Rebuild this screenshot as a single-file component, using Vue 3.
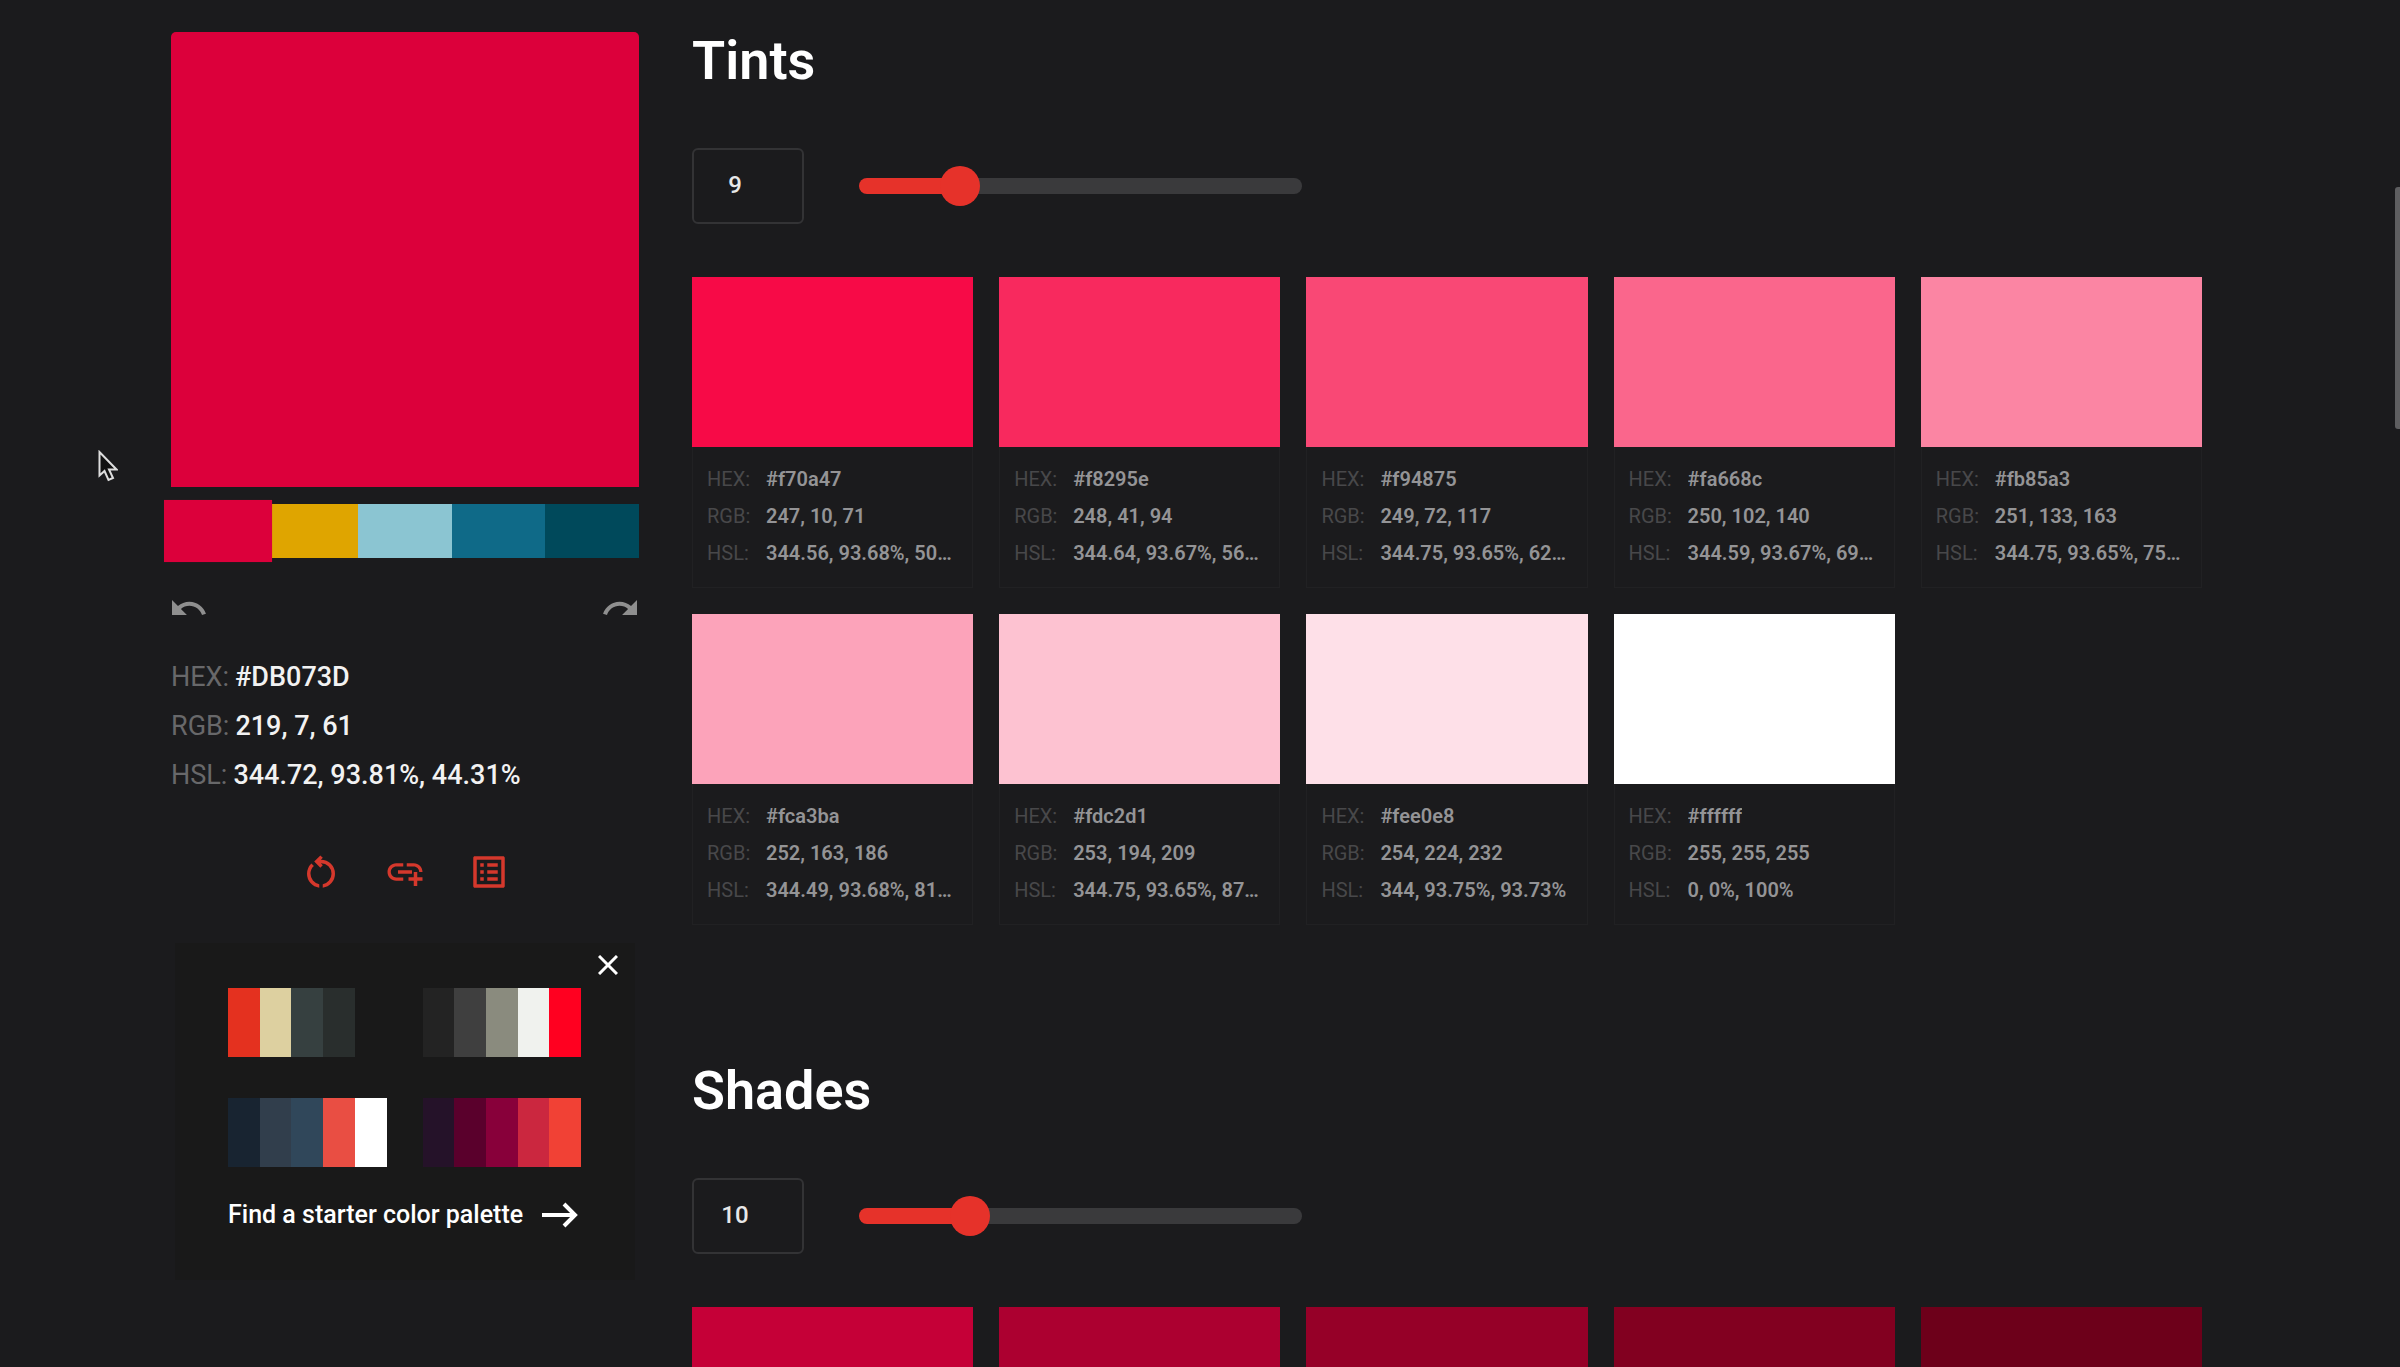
<script setup>
import { ref } from 'vue'

const base = ['#dc003b', '#dfa500', '#8bc5d2', '#0f6a88', '#00495b']
const details = [
  ['HEX', '#DB073D'],
  ['RGB', '219, 7, 61'],
  ['HSL', '344.72, 93.81%, 44.31%'],
]
const starters = [
  ['#e4311f', '#ddd0a0', '#364040', '#292e2d', '#191919'],
  ['#232323', '#3f3f3f', '#8a8b7e', '#f0f2ee', '#ff0020'],
  ['#182431', '#313e4c', '#30475a', '#e94e43', '#ffffff'],
  ['#251229', '#5a002c', '#88003a', '#cb273f', '#f14135'],
]
const tints = [
  ['#f70a47', '247, 10, 71', '344.56, 93.68%, 50.39%'],
  ['#f8295e', '248, 41, 94', '344.64, 93.67%, 56.67%'],
  ['#f94875', '249, 72, 117', '344.75, 93.65%, 62.94%'],
  ['#fa668c', '250, 102, 140', '344.59, 93.67%, 69.02%'],
  ['#fb85a3', '251, 133, 163', '344.75, 93.65%, 75.29%'],
  ['#fca3ba', '252, 163, 186', '344.49, 93.68%, 81.37%'],
  ['#fdc2d1', '253, 194, 209', '344.75, 93.65%, 87.65%'],
  ['#fee0e8', '254, 224, 232', '344, 93.75%, 93.73%'],
  ['#ffffff', '255, 255, 255', '0, 0%, 100%'],
].map(([hex, rgb, hsl]) => ({ hex, rows: [['HEX', hex], ['RGB', rgb], ['HSL', hsl]] }))
const shades = ['#c50037', '#ac0030', '#960028', '#820020', '#6d001a'].map((hex) => ({ hex, rows: [] }))

const MIN = 1
const MAX = 41
const sections = ref([
  { id: 'tints', title: 'Tints', count: 9, cards: tints },
  { id: 'shades', title: 'Shades', count: 10, cards: shades },
])
const fill = (n) => ((n - MIN) / (MAX - MIN)) * 100 + '%'
</script>

<template>
  <div class="page">
    <aside class="side">
      <div class="preview"></div>
      <div class="strip">
        <button
          v-for="(c, i) in base"
          :key="c"
          type="button"
          :class="{ active: i === 0 }"
          :style="{ background: c }"
          :aria-label="c"
        ></button>
      </div>
      <div class="history">
        <button type="button" aria-label="Undo">
          <svg viewBox="2 7 20.5 9"><path d="M12.5 8c-2.65 0-5.05.99-6.9 2.6L2 7v9h9l-3.62-3.62c1.39-1.16 3.16-1.88 5.12-1.88 3.54 0 6.55 2.31 7.6 5.5l2.37-.78C21.08 11.03 17.15 8 12.5 8z" /></svg>
        </button>
        <button type="button" aria-label="Redo">
          <svg viewBox="1.5 7 20.5 9"><path d="M18.4 10.6C16.55 8.99 14.15 8 11.5 8c-4.65 0-8.58 3.03-9.96 7.22L3.9 16c1.05-3.19 4.05-5.5 7.6-5.5 1.95 0 3.73.72 5.12 1.88L13 16h9V7l-3.6 3.6z" /></svg>
        </button>
      </div>
      <dl class="details">
        <div v-for="[k, v] in details" :key="k"><dt>{{ k }}:</dt><dd>{{ v }}</dd></div>
      </dl>
      <div class="tools">
        <button type="button" aria-label="Reset">
          <svg viewBox="0 0 24 24">
            <path d="M11 20.95Q7.975 20.575 5.988 18.312 4 16.05 4 13q0-1.65.65-3.163Q5.3 8.325 6.5 7.2l1.425 1.425q-.95.85-1.437 1.975Q6 11.725 6 13q0 2.2 1.4 3.887Q8.8 18.575 11 18.95Zm2 0v-2q2.175-.4 3.587-2.075Q18 15.2 18 13q0-2.5-1.75-4.25T12 7h-.075l1.1 1.1-1.4 1.4-3.5-3.5 3.5-3.5 1.4 1.4-1.1 1.1H12q3.35 0 5.675 2.325T20 13q0 3.025-1.988 5.288Q16.025 20.55 13 20.95Z" />
          </svg>
        </button>
        <button type="button" aria-label="Add link">
          <svg viewBox="0 0 24 24">
            <path d="M8 11h8v2H8v-2zm12.1 1H22c0-2.76-2.24-5-5-5h-4v1.900h4c1.710 0 3.100 1.390 3.100 3.100zM3.900 12c0-1.710 1.390-3.100 3.100-3.100h4V7H7c-2.760 0-5 2.240-5 5s2.240 5 5 5h4v-1.900H7c-1.710 0-3.100-1.390-3.100-3.100zM19 12h-2v3h-3v2h3v3h2v-3h3v-2h-3v-3z" />
          </svg>
        </button>
        <button type="button" aria-label="Show list">
          <svg viewBox="0 0 24 24">
            <path d="M19 5v14H5V5h14m1.100-2H3.900c-.5 0-.9.4-.9.9v16.200c0 .4.4.9.9.9h16.200c.4 0 .9-.5.9-.9V3.900c0-.5-.5-.9-.9-.9zM11 7h6v2h-6V7zm0 4h6v2h-6v-2zm0 4h6v2h-6zM7 7h2v2H7zm0 4h2v2H7zm0 4h2v2H7z" />
          </svg>
        </button>
      </div>
      <section class="starter">
        <button type="button" class="close" aria-label="Close">
          <svg viewBox="0 0 20 20"><path d="M1 1l18 18M19 1L1 19" /></svg>
        </button>
        <div class="palettes">
          <div v-for="(p, i) in starters" :key="i" class="palette">
            <span v-for="c in p" :key="c" :style="{ background: c }"></span>
          </div>
        </div>
        <a href="#" class="find">
          Find a starter color palette
          <svg viewBox="0 0 36 26"><path d="M0 13h33M22 2l11 11-11 11" /></svg>
        </a>
      </section>
    </aside>

    <main class="main">
      <section v-for="s in sections" :key="s.id" class="group">
        <h2>{{ s.title }}</h2>
        <div class="controls">
          <input v-model.number="s.count" type="number" class="count" :min="MIN" :max="MAX" :aria-label="s.title + ' count'" />
          <input
            v-model.number="s.count"
            type="range"
            class="range"
            :min="MIN"
            :max="MAX"
            :aria-label="s.title + ' amount'"
            :style="{ '--fill': fill(s.count) }"
          />
        </div>
        <div class="cards">
          <article v-for="card in s.cards" :key="card.hex" class="card">
            <div class="swatch" :style="{ background: card.hex }"></div>
            <dl>
              <div v-for="[k, v] in card.rows" :key="k"><dt>{{ k }}:</dt><dd>{{ v }}</dd></div>
            </dl>
          </article>
        </div>
      </section>
    </main>

    <div class="scrollbar"></div>
    <svg class="cursor" viewBox="0 0 20 32">
      <path d="M1.500 2v23.500l5-4.500 4 9 4.500-2-4-8.500h7.500z" />
    </svg>
  </div>
</template>

<style>
body {
  margin: 0;
  background: #1b1b1d;
}
</style>

<style scoped>
.page {
  position: relative;
  box-sizing: border-box;
  display: flex;
  align-items: flex-start;
  gap: 53px;
  height: 100vh;
  overflow: hidden;
  padding: 0 198px 0 171px;
  background: #1b1b1d;
  color: #fff;
  font-family: Roboto, sans-serif;
}
button {
  display: block;
  padding: 0;
  border: 0;
  background: none;
  color: inherit;
}
svg {
  display: block;
  fill: currentColor;
}
dl,
dd {
  margin: 0;
}
.side {
  flex: 0 0 468px;
  padding-top: 32px;
}
.preview {
  height: 455px;
  border-radius: 5px 5px 0 0;
  background: #dc003b;
}
.strip {
  display: flex;
  margin-top: 17px;
}
.strip button {
  position: relative;
  flex: 1;
  height: 54px;
}
.strip .active {
  z-index: 1;
  transform: scale(1.15);
}
.history {
  display: flex;
  justify-content: space-between;
  margin-top: 42px;
  padding: 0 2px 0 1px;
  color: #8f8f8f;
}
.history svg {
  width: 34px;
  height: 15px;
}
.details {
  margin-top: 38px;
  font-size: 27px;
  line-height: 49px;
}
.details div {
  display: flex;
  gap: 6px;
}
.details dt {
  color: #68686a;
}
.details dd {
  font-weight: 500;
  color: #f2f2f2;
}
.tools {
  display: flex;
  justify-content: center;
  gap: 42px;
  margin-top: 51px;
  padding-right: 1px;
  color: #d5382c;
}
.tools svg {
  width: 42px;
  height: 42px;
}
.starter {
  position: relative;
  box-sizing: border-box;
  height: 337px;
  margin: 50px 4px 0;
  padding: 45px 54px 0 53px;
  background: #191919;
}
.close {
  position: absolute;
  top: 12px;
  right: 17px;
}
.close svg {
  width: 20px;
  height: 20px;
  stroke: #fff;
  stroke-width: 3;
}
.palettes {
  display: grid;
  grid-template-columns: 1fr 1fr;
  gap: 41px 36px;
}
.palette {
  display: flex;
  height: 69px;
}
.palette span {
  flex: 1;
}
.find {
  display: flex;
  align-items: center;
  justify-content: space-between;
  margin-top: 32px;
  padding-right: 3px;
  color: #fff;
  font-size: 25px;
  font-weight: 500;
  line-height: 32px;
  text-decoration: none;
  white-space: nowrap;
}
.find svg {
  width: 36px;
  height: 26px;
  fill: none;
  stroke: #fff;
  stroke-width: 4;
}
.main {
  flex: 1;
  min-width: 0;
  padding-top: 29px;
}
.group {
  margin-bottom: 134px;
}
h2 {
  margin: 0;
  font-size: 54px;
  font-weight: 600;
  line-height: 64px;
}
.controls {
  display: flex;
  align-items: center;
  gap: 55px;
  margin-top: 55px;
}
.count {
  box-sizing: border-box;
  width: 112px;
  height: 76px;
  padding: 0 26px 2px 0;
  border: 2px solid #333335;
  border-radius: 6px;
  outline: 0;
  background: #1b1b1d;
  color: #e8e8e8;
  font: 500 24px Roboto, sans-serif;
  text-align: center;
  appearance: textfield;
}
.count::-webkit-inner-spin-button {
  display: none;
}
.range {
  width: 443px;
  height: 40px;
  margin: 0;
  background: none;
  appearance: none;
}
.range::-webkit-slider-runnable-track {
  height: 16px;
  border-radius: 8px;
  background: linear-gradient(to right, #e6322a var(--fill), #3a3a3c var(--fill));
}
.range::-webkit-slider-thumb {
  width: 40px;
  height: 40px;
  margin-top: -12px;
  border-radius: 50%;
  background: #e6322a;
  appearance: none;
}
.cards {
  display: grid;
  grid-template-columns: repeat(5, minmax(0, 1fr));
  gap: 26px;
  margin-top: 53px;
}
.card {
  box-sizing: border-box;
  height: 311px;
  border: 1px solid #212123;
  border-top: 0;
}
.swatch {
  height: 170px;
  margin: 0 -1px;
}
.card dl {
  padding: 14px 17px 0 14px;
  font-size: 20px;
  line-height: 37px;
}
.card dl div {
  display: flex;
}
.card dt {
  flex: 0 0 59px;
  color: #48484a;
}
.card dd {
  overflow: hidden;
  color: #949496;
  font-weight: 600;
  text-overflow: ellipsis;
  white-space: nowrap;
}
.scrollbar {
  position: absolute;
  top: 187px;
  right: 0;
  width: 5px;
  height: 242px;
  border-radius: 3px 0 0 3px;
  background: #5e5e60;
}
.cursor {
  position: absolute;
  top: 450px;
  left: 98px;
  width: 20px;
  height: 32px;
  fill: #111;
  stroke: #ddd;
  stroke-width: 2;
}
</style>
